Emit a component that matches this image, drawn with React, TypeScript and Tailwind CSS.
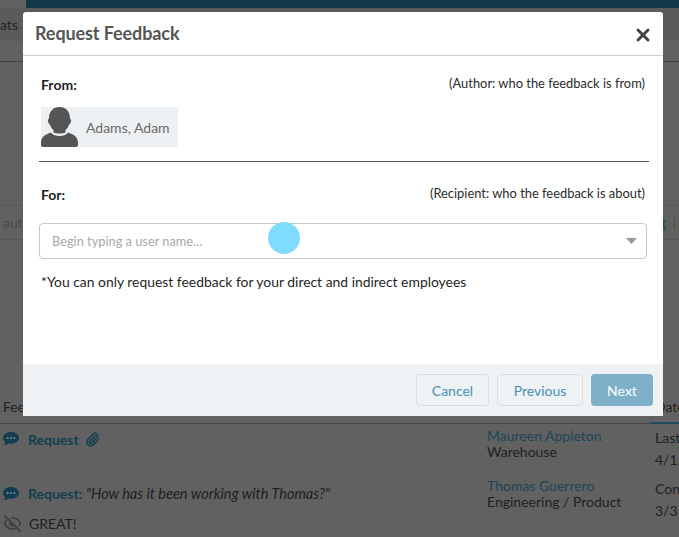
import { X, Paperclip, EyeOff } from "lucide-react";

function ChatIcon({ className }: { className?: string }) {
  return (
    <svg viewBox="0 0 16 14" className={className} fill="#123f50">
      <path d="M8 0C3.6 0 0 2.6 0 5.9c0 1.7 1 3.2 2.4 4.2-.2 1.1-.9 2.2-1.6 3 1.7-.1 3.4-.8 4.5-1.7.8.2 1.7.3 2.7.3 4.4 0 8-2.6 8-5.8S12.4 0 8 0z" />
      <circle cx="4.6" cy="6" r="1" fill="#7d8b90" />
      <circle cx="8" cy="6" r="1" fill="#7d8b90" />
      <circle cx="11.4" cy="6" r="1" fill="#7d8b90" />
    </svg>
  );
}

function App() {
  return (
    <div className="relative w-[679px] h-[537px] overflow-hidden bg-[#616161] font-['Lato',sans-serif] text-[14px] text-[#1f1f1f]">
      {/* page behind the dialog */}
      <div className="flex flex-col h-full">
        <div className="h-2 ml-[26px] bg-[#123a49]" />
        <div className="h-[33px] bg-[#5b5b5b] leading-[34px] text-[#222]">ats</div>
        <div className="h-5 box-content border-b border-[#3f3f3f]" />
        <div className="h-[143px]" />
        <div className="flex justify-between h-[35px] border-y border-[#595959] px-[3px] leading-[33px] text-[#4a4a4a]">
          <span>aut</span>
          <span className="flex gap-[6px]">
            <span className="underline text-[#1c4557]">t</span>
            <span>|</span>
          </span>
        </div>
        <div className="h-[155px]" />
        <div className="flex justify-between h-[29px] border-b border-[#474747] leading-6 pl-[3px] text-[#222]">
          <span>Fee</span>
          <span className="h-[29px] w-7 pl-1 border-b-2 border-[#1f4d5e] whitespace-nowrap">Date</span>
        </div>
        <div className="flex">
          <div className="flex-1 pt-[6px] pl-[3px]">
            <div className="flex items-center gap-[9px] h-[18px]">
              <ChatIcon className="w-4 h-[14px]" />
              <span className="font-bold text-[#123f50]">Request</span>
              <Paperclip size={15} strokeWidth={2.5} className="-ml-[3px] text-[#123f50]" />
            </div>
            <div className="flex items-center gap-[9px] h-[18px] mt-[37px]">
              <ChatIcon className="w-4 h-[14px]" />
              <span className="whitespace-nowrap text-[14.5px]">
                <span className="text-[14px] font-bold text-[#123f50]">Request:</span> <i>"How has it been working with Thomas?"</i>
              </span>
            </div>
            <div className="flex items-center gap-[7px] h-5 mt-[10px]">
              <EyeOff size={19} className="text-[#3f3f3f]" />
              <span>GREAT!</span>
            </div>
          </div>
          <div className="w-[168px] pt-1">
            <div className="text-[#1c4557] leading-4">Maureen Appleton</div>
            <div className="leading-4">Warehouse</div>
            <div className="text-[#1c4557] leading-4 mt-[18px]">Thomas Guerrero</div>
            <div className="leading-4">Engineering / Product</div>
          </div>
          <div className="w-6 pt-[3px]">
            <div className="whitespace-nowrap leading-[22px]">Last</div>
            <div className="whitespace-nowrap leading-[22px]">4/1/</div>
            <div className="whitespace-nowrap leading-[22px] mt-[7px]">Con</div>
            <div className="whitespace-nowrap leading-[22px]">3/31</div>
          </div>
        </div>
      </div>

      {/* dialog */}
      <div className="absolute left-[23px] top-3 w-[640px] h-[404px] flex flex-col bg-white rounded-t-[3px]">
        <div className="flex items-center justify-between h-11 pl-3 pr-[10px] border-b border-[#cfcfcf]">
          <h2 className="text-[18px] tracking-[-0.1px] font-bold text-[#555]">Request Feedback</h2>
          <X size={20} strokeWidth={3.5} className="mt-[2px] text-[#444]" />
        </div>
        <div className="flex-1 px-4 pt-[19px]">
          <div className="flex justify-between h-5 pl-[2px] pr-[2px] leading-5">
            <span className="font-bold">From:</span>
            <span className="-mt-[2px] text-[12.9px] text-[#2b2b2b]">(Author: who the feedback is from)</span>
          </div>
          <div className="mt-3 ml-[2px] flex items-center w-[137px] h-10 bg-[#edf1f3]">
            <svg viewBox="0 0 37 40" className="w-[37px] h-10" fill="#555">
              <path d="M18.5 0C12 0 8 4.5 8 11.5c-.9.4-1.2 1.4-1 2.8.2 1.6.9 2.9 1.9 3.2.8 2.7 2.3 4.8 4.1 6.2-1.6 1.3-.5 2.8 5.5 2.8s7.100-1.500 5.500-2.800c1.800-1.400 3.300-3.500 4.100-6.200 1-.3 1.700-1.600 1.900-3.200.2-1.400-.1-2.400-1-2.800C29 4.500 25 0 18.500 0z" />
              <path d="M0 36c0-6 4-8.500 10-10.500 2 2.700 5 3.500 8.500 3.500s6.500-.8 8.500-3.500c6 2 10 4.500 10 10.500v2q0 2-2 2H2q-2 0-2-2z" />
            </svg>
            <span className="ml-2 text-[#6a6a6a]">Adams, Adam</span>
          </div>
          <div className="mt-[14px] -mr-[2px] border-t border-[#555]" />
          <div className="mt-[23px] flex justify-between h-5 pl-[2px] pr-[2px] leading-5">
            <span className="font-bold">For:</span>
            <span className="-mt-[2px] text-[12.9px] text-[#2b2b2b]">(Recipient: who the feedback is about)</span>
          </div>
          <div className="mt-[18px] h-9 flex items-center justify-between pl-3 pr-[9px] border border-[#c8c8c8] rounded">
            <span className="pt-px text-[#aaa] text-[12.8px]">Begin typing a user name...</span>
            <svg viewBox="0 0 11 6" className="w-[11px] h-[6px]" fill="#999">
              <polygon points="0,0 11,0 5.500,6" />
            </svg>
          </div>
          <p className="mt-[13px] pl-[2px] text-[13.9px] leading-5">*You can only request feedback for your direct and indirect employees</p>
        </div>
        <div className="flex justify-end gap-2 h-[52px] pt-[10px] pr-[10px] bg-[#eef2f4]">
          <button className="w-[73px] h-8 rounded border border-[#dcdcdc] text-[#4a90b4]">Cancel</button>
          <button className="w-[86px] h-8 rounded border border-[#dcdcdc] text-[#4a90b4]">Previous</button>
          <button className="w-[62px] h-8 rounded bg-[#7eb0c9] text-white">Next</button>
        </div>
      </div>

      {/* click marker */}
      <div className="absolute left-[268px] top-[222px] w-8 h-8 rounded-full bg-[#80dcff]" />
    </div>
  );
}

export default App;
